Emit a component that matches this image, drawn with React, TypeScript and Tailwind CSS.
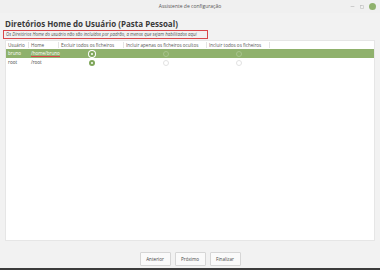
import { Minus, Square } from "lucide-react"

const rows = [
  { user: "bruno", home: "/home/bruno", selected: true },
  { user: "root", home: "/root", selected: false },
]

function Radio({ checked, onGreen }: { checked: boolean; onGreen: boolean }) {
  if (checked) {
    return (
      <span className="flex h-[6px] w-[6px] items-center justify-center rounded-full bg-[#7fa65b] ring-1 ring-white">
        <span className="h-[2px] w-[2px] rounded-full bg-white" />
      </span>
    )
  }
  return (
    <span
      className={`h-[6px] w-[6px] rounded-full border ${onGreen ? "border-[#a9c48e]" : "border-[#e2e2e2]"} bg-transparent`}
    />
  )
}

export default function App() {
  return (
    <div
      className="flex h-[270px] w-[380px] flex-col bg-[#f2f2f2] text-[#333]"
      style={{ fontFamily: '"Open Sans", "Noto Sans", sans-serif' }}
    >
      {/* title bar */}
      <div className="relative flex h-[13px] items-center justify-center bg-[#f0f0f0]">
        <span className="text-[5px] text-[#555]">Assistente de configuração</span>
        <div className="absolute right-[4px] top-[3px] flex items-center gap-[5px]">
          <Minus className="h-[5px] w-[5px] text-[#999]" strokeWidth={2} />
          <Square className="h-[4px] w-[4px] text-[#999]" strokeWidth={2} />
          <span className="h-[7px] w-[7px] rounded-full bg-[#8fb16c]" />
        </div>
      </div>

      <div className="flex flex-1 flex-col px-[5px] pt-[5px]">
        <h1 className="text-[8px] font-bold leading-[11px] text-[#3a3a3a]">
          Diretórios Home do Usuário (Pasta Pessoal)
        </h1>
        <div className="mt-[1px] w-[205px] -ml-[2px] border border-[#d9474a] px-[2px] py-[1px]">
          <p className="text-[4.4px] italic leading-[5px] text-[#555]">
            Os Diretórios Home do usuário não são incluídos por padrão, a menos que sejam habilitados aqui
          </p>
        </div>

        {/* table */}
        <div className="mt-[1px] h-[201px] w-[370px] border border-[#e6e6e6] bg-white">
          <div className="flex h-[8px] items-center text-[4.6px] font-medium text-[#555]">
            <div className="w-[23px] border-r border-[#e4e4e4] pl-[2px]">Usuário</div>
            <div className="w-[30px] border-r border-[#e4e4e4] pl-[2px]">Home</div>
            <div className="w-[65px] border-r border-[#e4e4e4] pl-[2px]">Excluir todos os ficheiros</div>
            <div className="w-[83px] border-r border-[#e4e4e4] pl-[2px]">Incluir apenas os ficheiros ocultos</div>
            <div className="w-[63px] border-r border-[#e4e4e4] pl-[2px]">Incluir todos os ficheiros</div>
          </div>
          {rows.map((r) => (
            <div
              key={r.user}
              className={`flex h-[9px] items-center text-[4.6px] ${r.selected ? "bg-[#8fb16c] text-white" : "text-[#444]"}`}
            >
              <div className="w-[23px] pl-[2px]">{r.user}</div>
              <div className="w-[30px] pl-[2px]">
                <span className={r.selected ? "border-b border-[#d9474a]" : ""}>{r.home}</span>
              </div>
              <div className="flex w-[65px] justify-center">
                <Radio checked onGreen={r.selected} />
              </div>
              <div className="flex w-[83px] justify-center">
                <Radio checked={false} onGreen={r.selected} />
              </div>
              <div className="flex w-[63px] justify-center">
                <Radio checked={false} onGreen={r.selected} />
              </div>
            </div>
          ))}
        </div>

        <div className="mt-[11px] flex justify-center gap-[4px]">
          {["Anterior", "Próximo", "Finalizar"].map((b) => (
            <button
              key={b}
              className="h-[14px] w-[31px] rounded-[1px] border border-[#d6d6d6] bg-[#fafafa] text-[4.6px] text-[#444]"
            >
              {b}
            </button>
          ))}
        </div>
      </div>
      <div className="h-[2px] bg-[#3c3c3c]" />
    </div>
  )
}
